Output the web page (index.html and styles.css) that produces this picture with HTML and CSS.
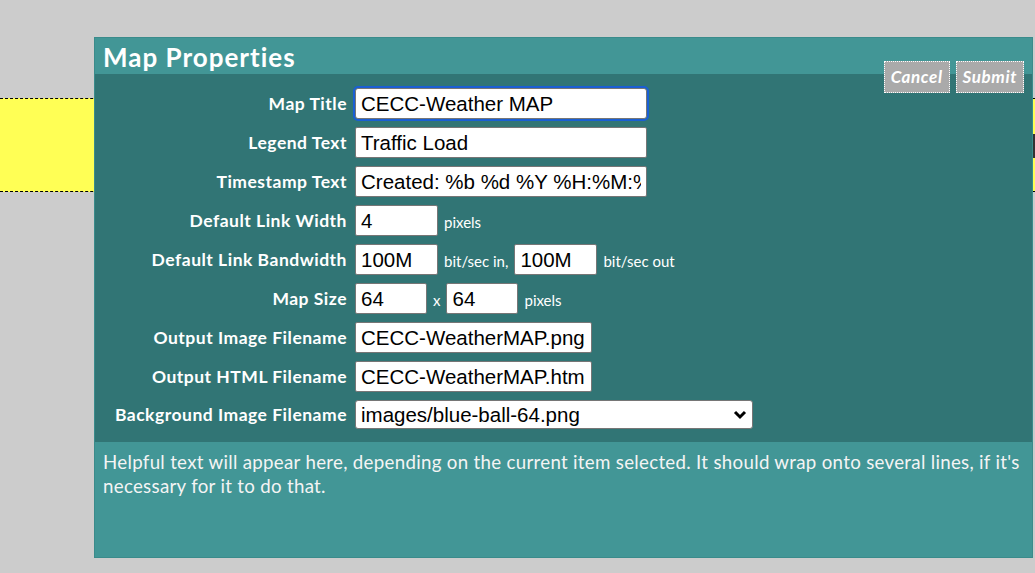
FILE: index.html
```html
<!DOCTYPE html>
<html lang="en">
<head>
    <meta charset="UTF-8">
    <title>Map Properties</title>
    <link rel="stylesheet" href="styles.css">
</head>
<body>

    <div class="canvas">
        <div class="node"><span class="node-label"></span></div>

        <div class="dialog">
            <div class="dialog-title">Map Properties</div>

            <div class="dialog-buttons">
                <span class="wm-button">Cancel</span>
                <span class="wm-button">Submit</span>
            </div>

            <div class="dialog-body">
                <label>Map Title</label>
                <div class="field"><input class="wide focused" type="text" value="CECC-Weather MAP"></div>

                <label>Legend Text</label>
                <div class="field"><input class="wide" type="text" value="Traffic Load"></div>

                <label>Timestamp Text</label>
                <div class="field"><input class="wide" type="text" value="Created: %b %d %Y %H:%M:%S"></div>

                <label>Default Link Width</label>
                <div class="field"><input class="short" type="text" value="4"> <span class="unit">pixels</span></div>

                <label>Default Link Bandwidth</label>
                <div class="field">
                    <input class="short" type="text" value="100M"> <span class="unit">bit/sec in,</span>
                    <input class="short" type="text" value="100M"> <span class="unit">bit/sec out</span>
                </div>

                <label>Map Size</label>
                <div class="field">
                    <input class="tiny" type="text" value="64"> <span class="unit">x</span>
                    <input class="tiny" type="text" value="64"> <span class="unit">pixels</span>
                </div>

                <label>Output Image Filename</label>
                <div class="field"><input class="medium" type="text" value="CECC-WeatherMAP.png"></div>

                <label>Output HTML Filename</label>
                <div class="field"><input class="medium" type="text" value="CECC-WeatherMAP.htm"></div>

                <label>Background Image Filename</label>
                <div class="field">
                    <div class="select-wrap">
                        <select>
                            <option>images/blue-ball-64.png</option>
                        </select>
                        <svg class="chevron" width="14" height="10" viewBox="0 0 14 10">
                            <path d="M2 2 L7 7 L12 2" fill="none" stroke="#000" stroke-width="3"/>
                        </svg>
                    </div>
                </div>
            </div>

            <div class="dialog-help">
                Helpful text will appear here, depending on the current item selected. It should wrap onto several lines, if it's necessary for it to do that.
            </div>
        </div>
    </div>

</body>
</html>
```

FILE: styles.css
```css
body {
    margin: 0;
    background: #cccccc;
    font-family: Lato, "Open Sans", sans-serif;
    overflow: hidden;
}

.canvas {
    position: relative;
    width: 1035px;
    height: 573px;
}

/* map node sitting behind the dialog */
.node {
    position: absolute;
    left: -10px;
    top: 98px;
    width: 1060px;
    height: 92px;
    background: #ffff55;
    border-top: 1px dashed #000;
    border-bottom: 1px dashed #000;
}

.node-label {
    position: absolute;
    left: 1043px;
    top: 35px;
    width: 20px;
    height: 24px;
    background: white;
    border-left: 2px solid #333;
}

.dialog {
    position: absolute;
    left: 94px;
    top: 37px;
    width: 937px;
    background: #317575;
    border: 1px solid #3a8b8b;
    color: white;
}

.dialog-title {
    height: 36px;
    background: #429696;
    padding-left: 8px;
    font-size: 26px;
    font-weight: bold;
    letter-spacing: 1px;
    line-height: 38px;
}

.dialog-buttons {
    position: absolute;
    right: 8px;
    top: 23px;
    display: flex;
    gap: 6px;
}

.wm-button {
    display: block;
    height: 30px;
    padding: 0 6px;
    background: #aaaaaa;
    border: 1px dotted white;
    font-size: 17px;
    font-weight: bold;
    font-style: italic;
    letter-spacing: 0.6px;
    line-height: 30px;
}

.dialog-body {
    display: grid;
    grid-template-columns: 252px 1fr;
    column-gap: 8px;
    row-gap: 8px;
    align-items: center;
    padding: 14px 0 13px;
}

.dialog-body label {
    text-align: right;
    font-size: 17.5px;
    font-weight: bold;
    letter-spacing: 0.5px;
}

.field {
    display: flex;
    align-items: baseline;
    gap: 6px;
}

input, select {
    box-sizing: border-box;
    height: 31px;
    padding: 0 5px;
    border: 1px solid #767676;
    border-radius: 2px;
    background: white;
    color: black;
    font-family: "Liberation Sans", Arial, sans-serif;
    font-size: 20.5px;
}

input.focused {
    outline: 2px solid #1a5fd4;
    outline-offset: 0;
    border-radius: 3px;
}

.wide {
    width: 292px;
}

.medium {
    width: 237px;
}

.short {
    width: 83px;
}

.tiny {
    width: 72px;
}

.unit {
    font-size: 15px;
}

.select-wrap {
    position: relative;
}

select {
    appearance: none;
    width: 398px;
    height: 29px;
    border-radius: 3px;
}

.chevron {
    position: absolute;
    right: 6px;
    top: 10px;
}

.dialog-help {
    box-sizing: border-box;
    height: 115px;
    padding: 8px 8px;
    background: #429696;
    font-size: 18.7px;
    letter-spacing: 0.3px;
    line-height: 24px;
    color: #f4f4f4;
}
```
